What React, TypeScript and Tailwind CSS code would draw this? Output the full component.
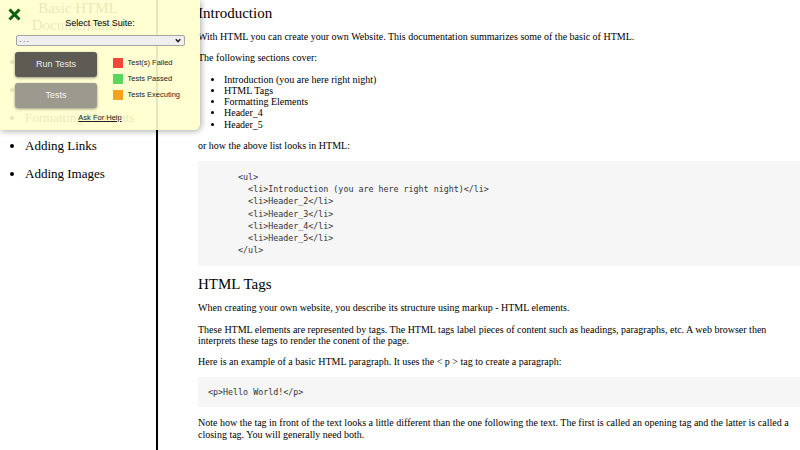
const listCode = [
  '      <ul>',
  '        <li>Introduction (you are here right night)</li>',
  '        <li>Header_2</li>',
  '        <li>Header_3</li>',
  '        <li>Header_4</li>',
  '        <li>Header_5</li>',
  '      </ul>',
].join('\n');

const navLinks = ['Introduction', 'HTML Tags', 'Formatting Elements', 'Adding Links', 'Adding Images'];

function TestPanel() {
  return (
    <div className="absolute left-0 top-0 h-[130px] w-[200px] rounded-br-[6px] bg-[rgba(255,255,204,0.9)] font-['Liberation_Sans',Arial,sans-serif] shadow-[1px_1px_6px_rgba(0,0,0,0.35)]">
      {/* toggle */}
      <svg className="absolute left-[8px] top-[8px] h-[13px] w-[13px]" viewBox="0 0 13 13">
        <path d="M1.5 1.5 L11.5 11.5 M11.5 1.5 L1.5 11.5" stroke="#0b5e0b" strokeWidth="3" />
      </svg>

      <div className="flex flex-col items-center pt-[18px]">
        <span className="text-[9px] leading-[11px] text-black">Select Test Suite:</span>
        <div className="mt-[6px] flex h-[11px] w-[169px] items-center justify-between rounded-[2px] border border-[#a5a5a5] bg-[#efefef] pl-[3px] pr-[3px] text-[6px] leading-[6px] text-[#222]">
          <span>- - -</span>
          <svg className="h-[5px] w-[6px]" viewBox="0 0 6 5">
            <path d="M0.8 1.2 L3 3.6 L5.2 1.2" fill="none" stroke="#111" strokeWidth="1.4" />
          </svg>
        </div>
      </div>

      <div className="mt-[6px] flex pl-[15px]">
        <div className="flex w-[82px] flex-col gap-[6px]">
          <button className="h-[25px] rounded-[3px] bg-[#5e5b54] text-[9px] text-[#ececec] shadow-[0_1px_3px_rgba(0,0,0,0.4)]">
            Run Tests
          </button>
          <button className="h-[25px] rounded-[3px] bg-[#9c9a8f] text-[9px] text-[#f4f4f4] shadow-[0_1px_3px_rgba(0,0,0,0.4)]">
            Tests
          </button>
        </div>
        <div className="ml-[16px] mt-[6px] flex flex-col gap-[6.5px] text-[7.5px] leading-[9px] text-[#222]">
          {[
            { c: 'bg-[#f0473a]', t: 'Test(s) Failed' },
            { c: 'bg-[#5bd55b]', t: 'Tests Passed' },
            { c: 'bg-[#f6a21e]', t: 'Tests Executing' },
          ].map(({ c, t }) => (
            <div key={t} className="flex items-center gap-[5px]">
              <span className={`h-[9.5px] w-[9.5px] ${c}`} />
              <span>{t}</span>
            </div>
          ))}
        </div>
      </div>

      <div className="mt-[5px] text-center text-[7.5px] leading-[9px] text-[#222] underline">Ask For Help</div>
    </div>
  );
}

export default function App() {
  const p = 'mt-[10px] text-[10px] leading-[11.25px]';

  return (
    <div className="relative flex h-[450px] w-[800px] overflow-hidden bg-white font-['Liberation_Serif','Times_New_Roman',serif] text-black">
      {/* ── Sidebar nav ─────────────────────────────────────────── */}
      <nav className="h-full w-[158px] shrink-0 border-r-2 border-black">
        <header className="text-center text-[15px] leading-[17px]">Basic HTML Documentation</header>
        <ul className="mt-[14px] list-disc pl-[25px] text-[13px] leading-[28px]">
          {navLinks.map((l) => (
            <li key={l}>{l}</li>
          ))}
        </ul>
      </nav>

      {/* ── Main doc ────────────────────────────────────────────── */}
      <main className="min-w-0 flex-1 pl-[40px]">
        <section>
          <h2 className="mt-[5px] text-[15px] leading-[17px]">Introduction</h2>
          <p className="mt-[9px] text-[10px] leading-[11.25px]">
            With HTML you can create your own Website. This documentation summarizes some of the basic of HTML.
          </p>
          <p className={p}>The following sections cover:</p>
          <ul className="mt-[10px] list-disc pl-[26px] text-[10px] leading-[11.25px]">
            <li>Introduction (you are here right night)</li>
            <li>HTML Tags</li>
            <li>Formatting Elements</li>
            <li>Header_4</li>
            <li>Header_5</li>
          </ul>
          <p className={p}>or how the above list looks in HTML:</p>
          <pre className="mt-[10px] bg-[#f6f6f6] px-[10px] py-[10px] font-['DejaVu_Sans_Mono',monospace] text-[8.33px] leading-[12.2px] text-[#333]">
            {listCode}
          </pre>
        </section>

        <section>
          <h2 className="mt-[10px] text-[15px] leading-[17px]">HTML Tags</h2>
          <p className="mt-[9px] text-[10px] leading-[11.25px]">
            When creating your own website, you describe its structure using markup - HTML elements.
          </p>
          <p className={p}>
            These HTML elements are represented by tags. The HTML tags label pieces of content such as headings,
            paragraphs, etc. A web browser then interprets these tags to render the conent of the page.
          </p>
          <p className={p}>Here is an example of a basic HTML paragraph. It uses the &lt; p &gt; tag to create a paragraph:</p>
          <pre className="mt-[10px] bg-[#f6f6f6] px-[10px] py-[10px] font-['DejaVu_Sans_Mono',monospace] text-[8.33px] leading-[10px] text-[#333]">
            {'<p>Hello World!</p>'}
          </pre>
          <p className={p}>
            Note how the tag in front of the text looks a little different than the one following the text. The first is
            called an opening tag and the latter is called a closing tag. You will generally need both.
          </p>
        </section>
      </main>

      <TestPanel />
    </div>
  );
}
